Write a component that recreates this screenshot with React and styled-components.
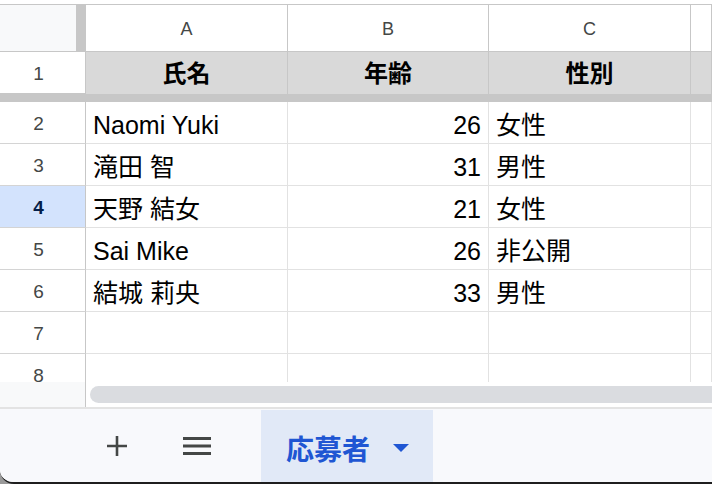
import React from "react";
import styled, { createGlobalStyle } from "styled-components";

const GlobalStyle = createGlobalStyle`
  html, body {
    margin: 0;
    padding: 0;
    background: #9a9a9a;
  }
  * {
    box-sizing: border-box;
  }
`;

const FONT = `"Liberation Sans", Arial, "Noto Sans CJK JP", sans-serif`;
const HEAD_LINE = "#c7c7c7";
const GRID_LINE = "#e2e2e2";

const Window = styled.div`
  width: 712px;
  height: 484px;
  display: flex;
  flex-direction: column;
  background: #ffffff;
  border-bottom: 2px solid #1e1e1e;
  border-bottom-left-radius: 14px;
  overflow: hidden;
  font-family: ${FONT};
`;

const TopGap = styled.div`
  height: 4px;
  flex: none;
  background: #ffffff;
`;

const SheetViewport = styled.div`
  height: 378px;
  flex: none;
  overflow: hidden;
  border-top: 1px solid ${HEAD_LINE};
`;

const Sheet = styled.div`
  display: grid;
  grid-template-columns: 86px 202px 201px 202px 1fr;
  grid-template-rows: 47px 42px 8px;
  grid-auto-rows: 42px;
`;

const Corner = styled.div`
  background: #f8f9fa;
  border-right: 10px solid ${HEAD_LINE};
  border-bottom: 1px solid ${HEAD_LINE};
`;

const ColHeader = styled.div`
  display: flex;
  align-items: center;
  justify-content: center;
  padding-top: 3px;
  background: #ffffff;
  color: #444746;
  font-size: 18px;
  border-right: 1px solid ${HEAD_LINE};
  border-bottom: 1px solid ${HEAD_LINE};
`;

const RowHeader = styled.div`
  display: flex;
  align-items: center;
  justify-content: center;
  padding: 2px 8px 0 0;
  font-size: 19px;
  background: ${(p) => (p.$selected ? "#d3e3fd" : "#ffffff")};
  color: ${(p) => (p.$selected ? "#041e49" : "#444746")};
  font-weight: ${(p) => (p.$selected ? 700 : 400)};
  border-right: 1px solid ${HEAD_LINE};
  border-bottom: 1px solid ${(p) => (p.$last ? HEAD_LINE : "#d4d4d4")};
`;

const TitleCell = styled.div`
  display: flex;
  align-items: center;
  justify-content: center;
  padding-top: 2px;
  background: #d9d9d9;
  color: #000000;
  font-size: 24px;
  font-weight: 700;
  line-height: 28px;
  border-right: 1px solid ${HEAD_LINE};
`;

const FreezeBar = styled.div`
  grid-column: 1 / -1;
  background: ${HEAD_LINE};
`;

const Cell = styled.div`
  display: flex;
  align-items: flex-end;
  justify-content: ${(p) => (p.$align === "right" ? "flex-end" : "flex-start")};
  padding: 0 7px 4px 7px;
  color: #000000;
  font-size: 25px;
  line-height: 28px;
  white-space: nowrap;
  overflow: hidden;
  border-right: 1px solid ${GRID_LINE};
  border-bottom: 1px solid ${GRID_LINE};
`;

const ScrollRow = styled.div`
  height: 25px;
  flex: none;
  display: flex;
`;

const ScrollCorner = styled.div`
  width: 86px;
  flex: none;
  background: #f8f9fa;
  border-right: 1px solid ${HEAD_LINE};
`;

const ScrollTrack = styled.div`
  flex: 1;
  padding: 4px 0 4px 4px;
  background: #ffffff;
`;

const ScrollThumb = styled.div`
  height: 17px;
  margin-right: -20px;
  border-radius: 9px;
  background: #dadce0;
`;

const Divider = styled.div`
  height: 2px;
  flex: none;
  background: #e3e3e3;
`;

const TabBar = styled.div`
  flex: 1;
  display: flex;
  align-items: stretch;
  padding: 1px 0 0 97px;
  background: #f8f9fc;
`;

const IconButton = styled.div`
  width: 40px;
  display: flex;
  align-items: center;
  justify-content: center;
  margin-right: ${(p) => p.$gap || 0}px;
  color: #444746;
`;

const SheetTab = styled.div`
  width: 172px;
  display: flex;
  align-items: center;
  padding: 4px 0 0 25px;
  background: #e1e9f7;
  color: #1f56d3;
`;

const TabLabel = styled.span`
  font-family: "Noto Sans CJK JP", sans-serif;
  font-size: 28px;
  font-weight: 700;
  line-height: 30px;
  margin-right: 23px;
`;

const PlusIcon = () => (
  <svg width="22" height="22" viewBox="0 0 22 22">
    <path d="M11 1v20M1 11h20" stroke="currentColor" strokeWidth="2.6" fill="none" />
  </svg>
);

const MenuIcon = () => (
  <svg width="28" height="18" viewBox="0 0 28 18">
    <path d="M0 1.5h28M0 9h28M0 16.5h28" stroke="currentColor" strokeWidth="3" fill="none" />
  </svg>
);

const CaretIcon = () => (
  <svg width="16" height="8" viewBox="0 0 16 8">
    <path d="M0 0h16L8 8z" fill="currentColor" />
  </svg>
);

const columns = ["A", "B", "C", ""];
const titles = ["氏名", "年齢", "性別", ""];
const people = [
  { name: "Naomi Yuki", age: "26", sex: "女性" },
  { name: "滝田 智", age: "31", sex: "男性" },
  { name: "天野 結女", age: "21", sex: "女性" },
  { name: "Sai Mike", age: "26", sex: "非公開" },
  { name: "結城 莉央", age: "33", sex: "男性" },
  { name: "", age: "", sex: "" },
  { name: "", age: "", sex: "" },
];

export default function App() {
  return (
    <>
      <GlobalStyle />
      <Window>
        <TopGap />
        <SheetViewport>
          <Sheet>
            <Corner />
            {columns.map((c, i) => (
              <ColHeader key={"h" + i}>{c}</ColHeader>
            ))}
            <RowHeader $last>1</RowHeader>
            {titles.map((t, i) => (
              <TitleCell key={"t" + i}>{t}</TitleCell>
            ))}
            <FreezeBar />
            {people.map((p, idx) => (
              <React.Fragment key={idx}>
                <RowHeader $selected={idx + 2 === 4}>{idx + 2}</RowHeader>
                <Cell>{p.name}</Cell>
                <Cell $align="right">{p.age}</Cell>
                <Cell>{p.sex}</Cell>
                <Cell />
              </React.Fragment>
            ))}
          </Sheet>
        </SheetViewport>
        <ScrollRow>
          <ScrollCorner />
          <ScrollTrack>
            <ScrollThumb />
          </ScrollTrack>
        </ScrollRow>
        <Divider />
        <TabBar>
          <IconButton $gap={40}>
            <PlusIcon />
          </IconButton>
          <IconButton $gap={44}>
            <MenuIcon />
          </IconButton>
          <SheetTab>
            <TabLabel>応募者</TabLabel>
            <CaretIcon />
          </SheetTab>
        </TabBar>
      </Window>
    </>
  );
}
